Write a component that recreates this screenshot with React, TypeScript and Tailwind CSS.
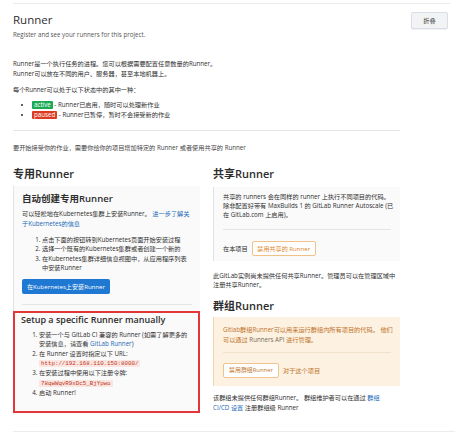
const font = { fontFamily: '"Open Sans", "Noto Sans CJK SC", sans-serif' }

export default function App() {
  return (
    <div
      className="relative w-[474px] h-[437px] overflow-hidden bg-white text-[#2e2e2e] font-['Open_Sans','Noto_Sans_CJK_SC',sans-serif]"
      style={font}
    >
      <div className="ml-[13px] w-[437px] mt-[3px] border-t border-[#ececec]">
        {/* header */}
        <div className="flex justify-between">
          <div className="pt-[9px]">
            <h2 className="text-[11.5px] leading-[14px] font-medium text-[#2e2e2e]">Runner</h2>
            <p className="mt-[3px] text-[6.2px] leading-[9px] text-[#555]">Register and see your runners for this project.</p>
          </div>
          <button className="mt-[8px] mr-[2px] w-[37px] h-[17px] rounded-[2px] border border-[#d8dde6] bg-[#f2f3f5] text-[6.2px] text-[#333] shadow-[0_1px_1px_rgba(0,0,0,0.06)]">
            折叠
          </button>
        </div>

        <div className="w-[387px] text-[6.2px]">
          <p className="mt-[20px] leading-[10px]">
            Runner是一个执行任务的进程。您可以根据需要配置任意数量的Runner。
            <br />
            Runner可以放在不同的用户、服务器，甚至本地机器上。
          </p>
          <p className="mt-[6px] leading-[10px]">每个Runner可以处于以下状态中的其中一种：</p>
          <ul className="mt-[5px] list-disc pl-[19px] leading-[10px]">
            <li>
              <span className="inline-block rounded-[1px] bg-[#1aaa55] px-[2px] leading-[8px] text-white">active</span>
              <span> - Runner已启用，随时可以处理新作业</span>
            </li>
            <li>
              <span className="inline-block rounded-[1px] bg-[#db3b21] px-[2px] leading-[8px] text-white">paused</span>
              <span> - Runner已暂停，暂时不会接受新的作业</span>
            </li>
          </ul>
          <div className="mt-[10px] border-t border-[#e5e5e5]" />
          <p className="mt-[12px] leading-[10px] text-[#444]">要开始接受你的作业，需要你给你的项目增加特定的 Runner 或者使用共享的 Runner</p>

          <div className="mt-[14px] flex gap-[13px]">
            {/* left column */}
            <div className="w-[187px]">
              <h3 className="text-[11px] leading-[14px] font-semibold">专用Runner</h3>
              <div className="mt-[5px] border-l border-[#e3e3e3] bg-[#fafafa] pb-[1px]">
                <div className="px-[8px]">
                  <h4 className="pt-[7px] text-[9.5px] leading-[12px] font-semibold">自动创建专用Runner</h4>
                  <p className="mt-[4px] leading-[10px]">
                    可以轻松地在Kubernetes集群上安装Runner。 <span className="text-[#1b69b6]">进一步了解关于Kubernetes的信息</span>
                  </p>
                  <ol className="mt-[6px] list-decimal pl-[20px] leading-[9.4px]">
                    <li>点击下面的按钮转到Kubernetes页面开始安装过程</li>
                    <li>选择一个既有的Kubernetes集群或者创建一个新的</li>
                    <li>在Kubernetes集群详细信息视图中，从应用程序列表中安装Runner</li>
                  </ol>
                  <button className="mt-[6px] h-[15px] w-[88px] rounded-[2px] bg-[#1f78d1] text-[6.1px] text-white">
                    在Kubernetes上安装Runner
                  </button>
                  <div className="mt-[10px] border-t border-[#e5e5e5]" />
                </div>
                <div className="mt-[6px] -ml-px h-[102px] border-2 border-[#e2363a] px-[6px]">
                  <h4 className="pt-[1px] text-[9px] leading-[12px] font-semibold">Setup a specific Runner manually</h4>
                  <ol className="mt-[4px] list-decimal pl-[18px] leading-[9.6px]">
                    <li>
                      安装一个与 GitLab CI 兼容的 Runner (如需了解更多的安装信息，请查看 <span className="text-[#1b69b6]">GitLab Runner</span>)
                    </li>
                    <li>
                      在 Runner 设置时指定以下 URL:
                      <br />
                      <code className="bg-[#fbe5e1] px-[2px] text-[5.8px] leading-[8px] text-[#c0341d] font-['Liberation_Mono',monospace]">
                        http://192.168.110.150:8000/
                      </code>
                    </li>
                    <li>
                      在安装过程中使用以下注册令牌:
                      <br />
                      <code className="bg-[#fbe5e1] px-[2px] text-[5.8px] leading-[8px] text-[#c0341d] font-['Liberation_Mono',monospace]">
                        78qwWqvR9xDc5_BjYpwo
                      </code>
                    </li>
                    <li>启动 Runner!</li>
                  </ol>
                </div>
              </div>
            </div>

            {/* right column */}
            <div className="w-[187px]">
              <h3 className="text-[11px] leading-[14px] font-semibold">共享Runner</h3>
              <div className="mt-[6px] border-l border-[#e3e3e3] bg-[#fafafa] pl-[9px] pr-[5px] pt-[5px] pb-[5px]">
                <p className="leading-[9px]">
                  共享的 runners 会在同样的 runner 上执行不同项目的代码。除非配置好带有 MaxBuilds 1 的 GitLab Runner Autoscale (已在 GitLab.com 上启用)。
                </p>
                <div className="mt-[10px] mr-[4px] border-t border-[#e5e5e5]" />
                <div className="mt-[11px] flex items-center gap-[4px]">
                  <span>在本项目</span>
                  <button className="h-[15px] w-[64px] rounded-[2px] border border-[#f0c28a] bg-white text-[6.1px] text-[#e2882a]">
                    禁用共享的 Runner
                  </button>
                </div>
              </div>
              <p className="mt-[10px] leading-[9px]">此GitLab实例尚未提供任何共享Runner。管理员可以在管理区域中注册共享Runner。</p>

              <h3 className="mt-[10px] text-[11px] leading-[14px] font-semibold">群组Runner</h3>
              <div className="mt-[4px] border-l border-[#f3d7b0] bg-[#fdf1e1] pl-[9px] pr-[6px] pt-[8px] pb-[8px] text-[#c0732a]">
                <p className="leading-[9.5px]">
                  Gitlab群组Runner可以用来运行群组内所有项目的代码。 他们可以通过 <span className="text-[#7a6a58]">Runners API</span> 进行管理。
                </p>
                <div className="mt-[8px] mr-[3px] border-t border-[#f3e2cb]" />
                <div className="mt-[10px] flex items-center gap-[4px]">
                  <button className="h-[15px] w-[56px] rounded-[2px] border border-[#efc48f] bg-white text-[5.9px] text-[#c0732a]">
                    禁用群组Runner
                  </button>
                  <span>对于这个项目</span>
                </div>
              </div>
              <p className="mt-[7px] pr-[14px] leading-[9.5px]">
                该群组未提供任何群组Runner。 群组维护者可以在通过 <span className="text-[#1b69b6]">群组 CI/CD 设置</span> 注册群组级 Runner
              </p>
            </div>
          </div>
        </div>
      </div>
      <div className="absolute left-[13px] top-[431px] w-[442px] border-t border-[#ececec]" />
    </div>
  )
}
